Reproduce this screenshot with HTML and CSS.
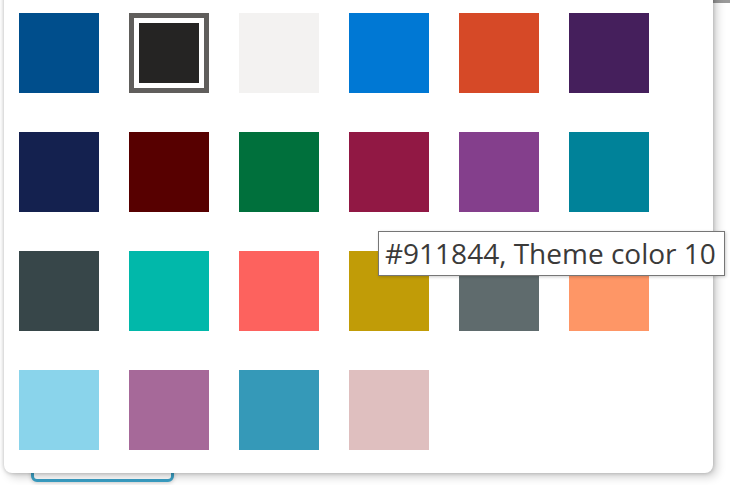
FILE: index.html
```html
<!DOCTYPE html>
<html lang="en">

<head>
    <meta charset="utf-8">
    <title>Theme colors</title>
    <link rel="stylesheet" href="styles.css">
</head>

<body>
    <div class="kant"></div>
    <button class="trigger"></button>

    <section class="picker">
        <div class="swatches">
            <span class="swatch" style="background:#004e8c"></span>
            <span class="swatch valgt" style="background:#252423"></span>
            <span class="swatch" style="background:#f3f2f1"></span>
            <span class="swatch" style="background:#0078d4"></span>
            <span class="swatch" style="background:#d64927"></span>
            <span class="swatch" style="background:#451f5c"></span>

            <span class="swatch" style="background:#14214f"></span>
            <span class="swatch" style="background:#570000"></span>
            <span class="swatch" style="background:#00703c"></span>
            <span class="swatch" style="background:#911844"></span>
            <span class="swatch" style="background:#843f8c"></span>
            <span class="swatch" style="background:#008299"></span>

            <span class="swatch" style="background:#374649"></span>
            <span class="swatch" style="background:#01b8aa"></span>
            <span class="swatch" style="background:#fd625e"></span>
            <span class="swatch" style="background:#c19c07"></span>
            <span class="swatch" style="background:#5f6b6d"></span>
            <span class="swatch" style="background:#fe9666"></span>

            <span class="swatch" style="background:#8ad4eb"></span>
            <span class="swatch" style="background:#a66999"></span>
            <span class="swatch" style="background:#3599b8"></span>
            <span class="swatch" style="background:#dfbfbf"></span>
        </div>
    </section>

    <div class="tooltip">#911844, Theme color 10</div>
</body></html>
```

FILE: styles.css
```css
html,
body {
    margin: 0;
    height: 100%;
    overflow: hidden;
    background: #fff;
    font-family: "Open Sans", "Noto Sans", sans-serif;
}

.picker {
    position: relative;
    z-index: 2;
    width: 709px;
    height: 493px;
    margin: -20px 0 0 4px;
    padding: 33px 0 0 15px;
    box-sizing: border-box;
    background: #fff;
    border-radius: 8px;
    box-shadow: 0 0 4px rgba(0, 0, 0, 0.25), 4px 4px 10px rgba(0, 0, 0, 0.18);
}

.swatches {
    display: grid;
    grid-template-columns: repeat(6, 80px);
    grid-auto-rows: 80px;
    column-gap: 30px;
    row-gap: 39px;
}

.swatch {
    display: block;
    width: 80px;
    height: 80px;
    box-sizing: border-box;
}

.valgt {
    border: 5px solid #605e5c;
    box-shadow: inset 0 0 0 5px #fff;
}

/* kanten af noget der ligger over panelet */
.kant {
    position: absolute;
    z-index: 1;
    left: 708px;
    top: 0;
    width: 22px;
    height: 3px;
    background: #9a9a9a;
}

/* knappen der ligger bag panelet */
.trigger {
    position: absolute;
    z-index: 1;
    left: 31px;
    top: 440px;
    width: 143px;
    height: 42px;
    border: 3px solid #3a9fc4;
    border-radius: 6px;
    background: #fff;
    box-shadow: 0 1px 4px rgba(0, 0, 0, 0.2);
}

.tooltip {
    position: absolute;
    z-index: 3;
    left: 378px;
    top: 231px;
    width: 347px;
    height: 45px;
    box-sizing: border-box;
    border: 1px solid #767676;
    background: #fff;
    color: #3b3a39;
    font-size: 28px;
    line-height: 42px;
    padding-left: 6px;
    white-space: nowrap;
    box-shadow: 1px 1px 3px rgba(0, 0, 0, 0.2);
}
```
